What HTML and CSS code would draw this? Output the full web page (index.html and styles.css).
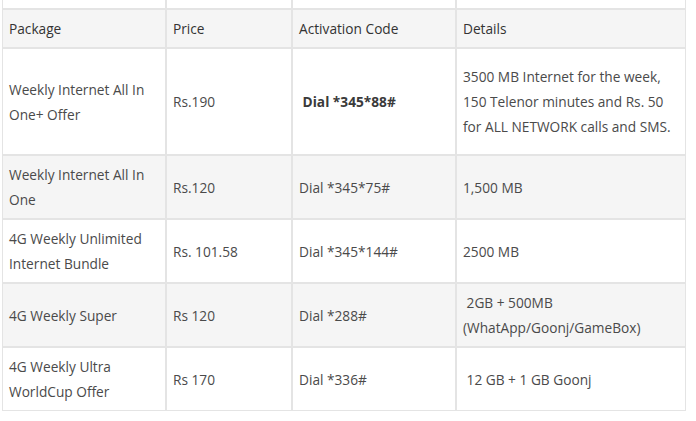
FILE: index.html
```html
<!DOCTYPE html>
<html>
<head>
<meta charset="utf-8">
<link rel="stylesheet" href="styles.css">
</head>
<body>
<table class="packages">
  <colgroup>
    <col class="c-pack">
    <col class="c-price">
    <col class="c-code">
    <col class="c-details">
  </colgroup>
  <tr class="stub"><td></td><td></td><td></td><td></td></tr>
  <tr class="head">
    <td>Package</td>
    <td>Price</td>
    <td>Activation Code</td>
    <td>Details</td>
  </tr>
  <tr>
    <td>Weekly Internet All In One+ Offer</td>
    <td>Rs.190</td>
    <td><strong>&nbsp;Dial *345*88#</strong></td>
    <td><p class="detail-p">3500 MB Internet for the week, 150 Telenor minutes and Rs. 50 for ALL NETWORK calls and SMS.</p></td>
  </tr>
  <tr class="alt">
    <td>Weekly Internet All In One</td>
    <td>Rs.120</td>
    <td>Dial *345*75#</td>
    <td>1,500 MB</td>
  </tr>
  <tr>
    <td>4G Weekly Unlimited Internet Bundle</td>
    <td>Rs. 101.58</td>
    <td>Dial *345*144#</td>
    <td>2500 MB</td>
  </tr>
  <tr class="alt">
    <td>4G Weekly Super</td>
    <td>Rs 120</td>
    <td>Dial *288#</td>
    <td>&nbsp;2GB + 500MB (WhatApp/Goonj/GameBox)</td>
  </tr>
  <tr>
    <td>4G Weekly Ultra WorldCup Offer</td>
    <td>Rs 170</td>
    <td>Dial *336#</td>
    <td>&nbsp;12 GB + 1 GB Goonj</td>
  </tr>
</table>
</body>
</html>
```

FILE: styles.css
```css
html, body {
  margin: 0;
  padding: 0;
  background: #ffffff;
}

body {
  font-family: "Open Sans", "Noto Sans", sans-serif;
  font-size: 13.7px;
  color: #4a4a4a;
}

.packages {
  margin-left: 2px;
  width: 684px;
  table-layout: fixed;
  border-collapse: separate;
  border-spacing: 0;
}

.c-pack { width: 164px; }
.c-price { width: 126px; }
.c-code { width: 164px; }
.c-details { width: 230px; }

.packages td {
  border: 1px solid #e4e4e4;
  padding: 6px 6px;
  line-height: 25px;
  vertical-align: middle;
  text-align: left;
}

.packages .stub td {
  border-top: none;
  padding: 0;
  height: 8px;
  line-height: 8px;
}

.head td {
  background: #f5f5f5;
  color: #333333;
}

.alt td {
  background: #f5f5f5;
}

.packages strong {
  font-weight: 700;
  color: #3a3a3a;
}

.detail-p {
  margin: 9px 0;
}
```
